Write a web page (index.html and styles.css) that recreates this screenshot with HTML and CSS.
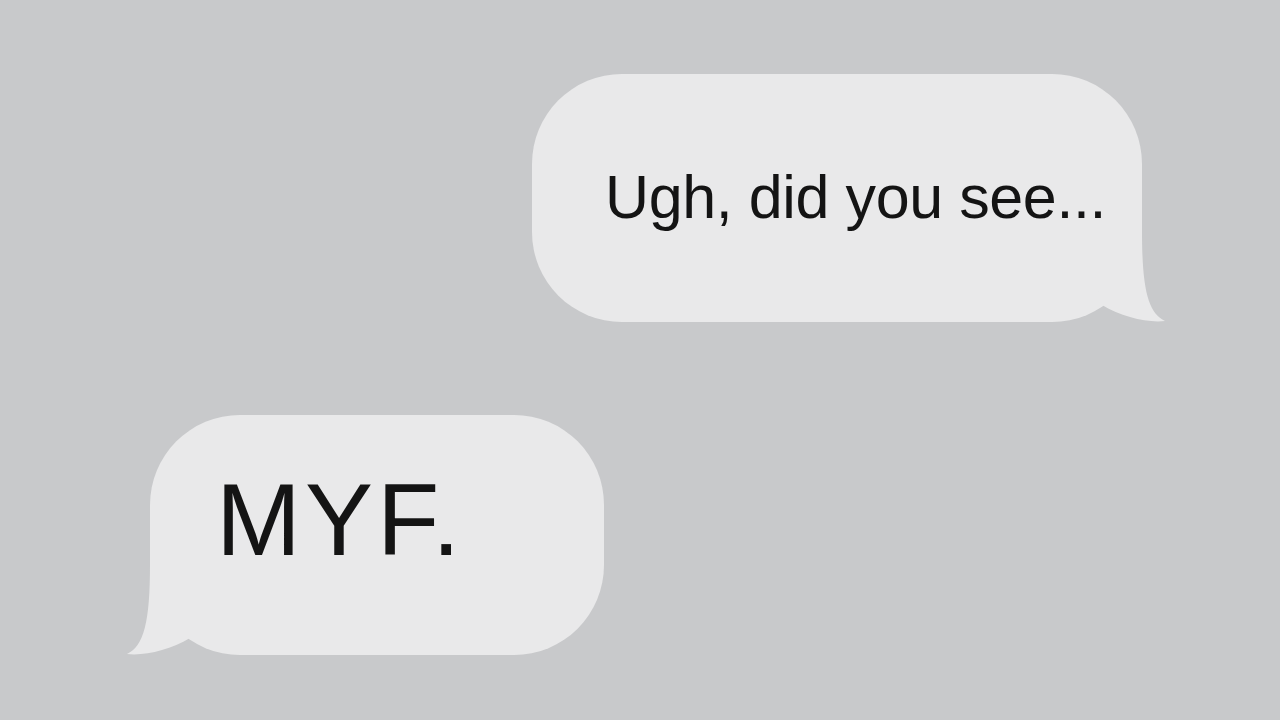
FILE: index.html
```html
<!DOCTYPE html>
<html lang="en">
<head>
<meta charset="utf-8">
<title>Messages</title>
<link rel="stylesheet" href="styles.css">
</head>
<body>
<main class="thread">
  <div class="bubble bubble-sent">
    <span class="msg msg-sent">Ugh, did you see...</span>
    <svg class="tail tail-right" viewBox="0 0 74 91" width="74" height="91" aria-hidden="true">
      <path d="M0 0 L50 0 C50 58 56 82 73 90 C55 92 30 86 10 74 L0 40 Z" fill="#e9e9ea"/>
    </svg>
  </div>
  <div class="bubble bubble-recv">
    <span class="msg msg-recv">MYF.</span>
    <svg class="tail tail-left" viewBox="0 0 74 91" width="74" height="91" aria-hidden="true">
      <path d="M0 0 L50 0 C50 58 56 82 73 90 C55 92 30 86 10 74 L0 40 Z" fill="#e9e9ea"/>
    </svg>
  </div>
</main>
</body>
</html>
```
FILE: styles.css
```css
html, body {
  margin: 0;
  padding: 0;
}
body {
  width: 1280px;
  height: 720px;
  overflow: hidden;
  background: #c8c9cb;
  font-family: "Liberation Sans", Arial, sans-serif;
  color: #141414;
}
.thread {
  display: flex;
  flex-direction: column;
  align-items: flex-start;
  padding-top: 74px;
  gap: 93px;
}
.bubble {
  position: relative;
  background: #e9e9ea;
  border-radius: 90px;
  display: flex;
  align-items: center;
  box-sizing: border-box;
}
.bubble-sent {
  margin-left: 532px;
  width: 610px;
  height: 248px;
  padding-left: 73px;
  padding-bottom: 2px;
}
.bubble-recv {
  margin-left: 150px;
  width: 454px;
  height: 240px;
  padding-left: 66px;
  padding-bottom: 30px;
}
.msg {
  position: relative;
  z-index: 1;
  white-space: nowrap;
  line-height: normal;
}
.msg-sent {
  font-size: 61px;
  letter-spacing: -0.4px;
}
.msg-recv {
  font-size: 102px;
  letter-spacing: 4px;
}
.tail {
  position: absolute;
  bottom: 0;
  display: block;
}
.tail-right {
  right: -24px;
}
.tail-left {
  left: -24px;
  transform: scaleX(-1);
}
```
